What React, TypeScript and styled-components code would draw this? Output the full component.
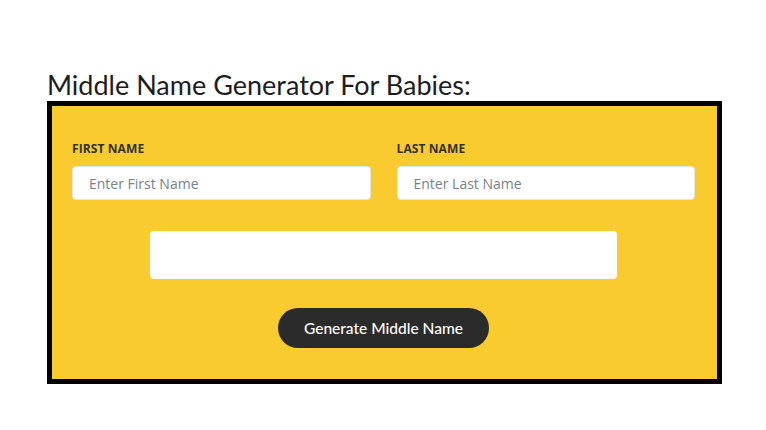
import React from 'react';
import styled, { createGlobalStyle } from 'styled-components';

const GlobalStyle = createGlobalStyle`
  body {
    margin: 0;
    background: #ffffff;
    font-family: Lato, "Open Sans", sans-serif;
  }
`;

const Page = styled.div`
  padding: 70px 44px 0 47px;
  width: 675px;
`;

const Title = styled.h1`
  margin: 0 0 1px 0;
  font-family: Lato, sans-serif;
  font-weight: 400;
  font-size: 27px;
  line-height: 30px;
  color: #1d1d1d;
`;

const Panel = styled.div`
  border: 5px solid #000000;
  background: #facb2f;
  padding: 36px 22px 31px 20px;
  display: flex;
  flex-direction: column;
  align-items: center;
`;

const Fields = styled.div`
  display: grid;
  grid-template-columns: 1fr 1fr;
  column-gap: 26px;
  width: 100%;
`;

const Field = styled.div`
  display: flex;
  flex-direction: column;
`;

const Label = styled.label`
  font-family: "Open Sans", sans-serif;
  font-weight: 700;
  font-size: 12px;
  letter-spacing: 0.1px;
  color: #333333;
  line-height: 14px;
  margin-bottom: 10px;
`;

const Input = styled.input`
  box-sizing: border-box;
  height: 34px;
  border: 1px solid #e4e4e4;
  border-radius: 4px;
  background: #ffffff;
  padding: 0 16px;
  font-family: "Open Sans", sans-serif;
  font-size: 14px;
  color: #333;
  outline: none;
  &::placeholder {
    color: #7a7f88;
  }
`;

const Result = styled.div`
  width: 467px;
  height: 48px;
  margin-top: 31px;
  background: #ffffff;
  border-radius: 4px;
`;

const GenerateButton = styled.button`
  margin-top: 29px;
  width: 211px;
  height: 40px;
  border: none;
  border-radius: 20px;
  background: #2b2b2b;
  color: #ffffff;
  font-family: Lato, sans-serif;
  font-size: 15.5px;
  font-weight: 500;
  cursor: pointer;
`;

function App() {
  return (
    <>
      <GlobalStyle />
      <Page>
        <Title>Middle Name Generator For Babies:</Title>
        <Panel>
          <Fields>
            <Field>
              <Label>FIRST NAME</Label>
              <Input placeholder="Enter First Name" />
            </Field>
            <Field>
              <Label>LAST NAME</Label>
              <Input placeholder="Enter Last Name" />
            </Field>
          </Fields>
          <Result />
          <GenerateButton>Generate Middle Name</GenerateButton>
        </Panel>
      </Page>
    </>
  );
}

export default App;
